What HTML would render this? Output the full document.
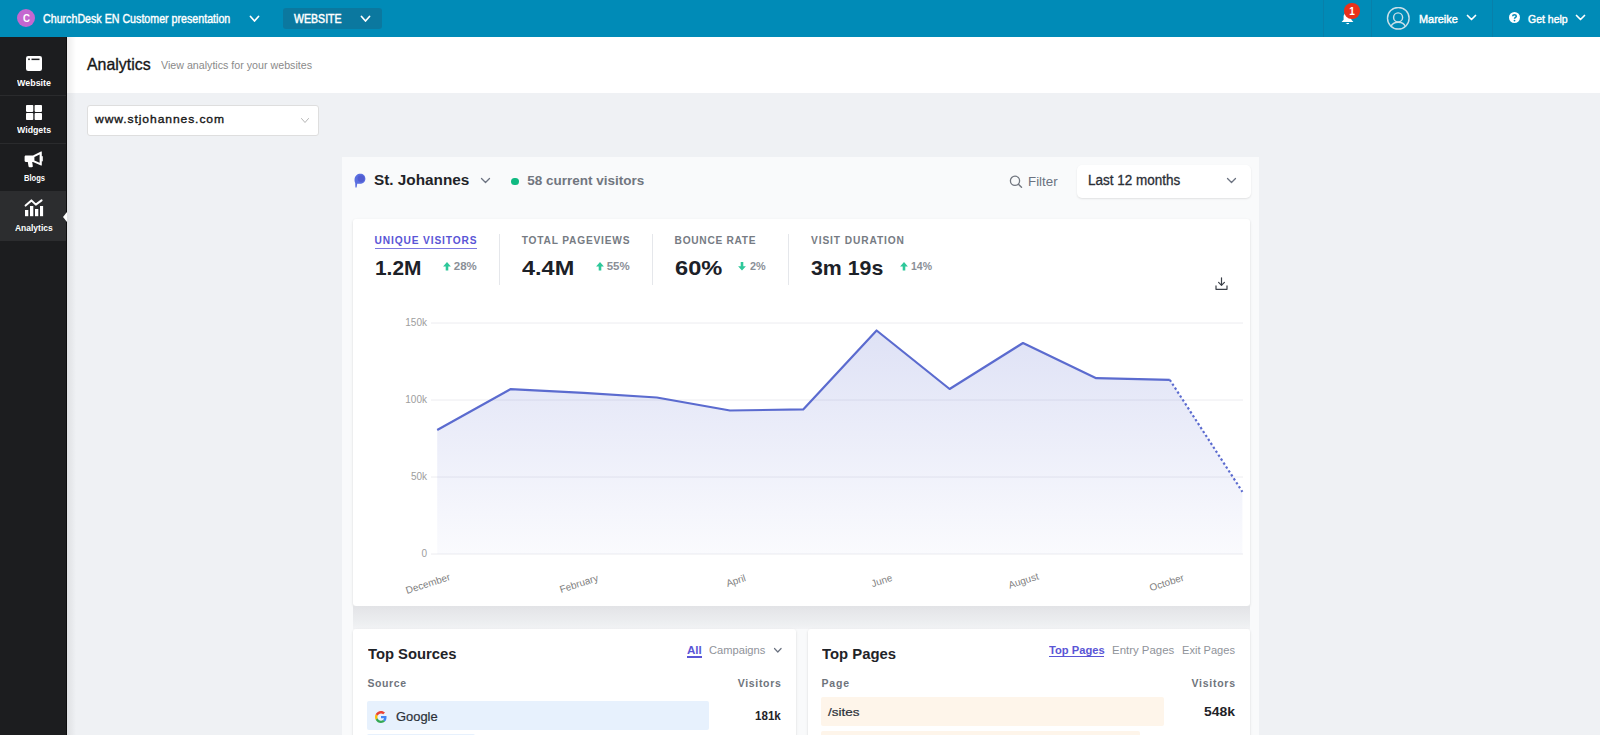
<!DOCTYPE html>
<html><head><meta charset="utf-8">
<style>
*{box-sizing:border-box;margin:0;padding:0}
html,body{width:1600px;height:735px;overflow:hidden;background:#eff1f4;font-family:"Liberation Sans",sans-serif}
body{position:relative}
.t{position:absolute;white-space:nowrap}
.b{position:absolute}
</style></head><body>
<div class="b" style="left:0;top:0;width:1600px;height:37px;background:#008bb7"></div>
<div class="b" style="left:17.3px;top:9.2px;width:18px;height:18px;border-radius:50%;background:#c567d0"></div>
<div class="t" style="left:22.60px;top:13.64px;font-size:10px;line-height:10px;color:#fff;font-weight:bold;transform:scaleX(0.9693);transform-origin:0 0;">C</div>
<div class="t" style="left:43.30px;top:12.87px;font-size:12.2px;line-height:12.2px;color:#fff;transform:scaleX(0.8750);transform-origin:0 0;-webkit-text-stroke:0.4px #fff;">ChurchDesk EN Customer presentation</div>
<svg class="t" style="left:249px;top:14.5px" width="11" height="7.5" viewBox="-1 -1 11 7.5"><path d="M0.5 0.5 L4.5 5.0 L8.5 0.5" fill="none" stroke="#fff" stroke-width="1.7" stroke-linecap="round" stroke-linejoin="round"/></svg>
<div class="b" style="left:283px;top:8px;width:99px;height:21px;background:#0b789f;border-radius:3px"></div>
<div class="t" style="left:293.90px;top:12.52px;font-size:12.5px;line-height:12.5px;color:#fff;transform:scaleX(0.8461);transform-origin:0 0;-webkit-text-stroke:0.5px #fff;">WEBSITE</div>
<svg class="t" style="left:360px;top:14.5px" width="11" height="7.5" viewBox="-1 -1 11 7.5"><path d="M0.5 0.5 L4.5 5.0 L8.5 0.5" fill="none" stroke="#fff" stroke-width="1.7" stroke-linecap="round" stroke-linejoin="round"/></svg>
<div class="b" style="left:1323px;top:0;width:1px;height:37px;background:#0880aa"></div>
<div class="b" style="left:1371px;top:0;width:1px;height:37px;background:#0880aa"></div>
<div class="b" style="left:1492px;top:0;width:1px;height:37px;background:#0880aa"></div>
<svg class="t" style="left:1340px;top:11px" width="15" height="14" viewBox="0 0 15 14"><path d="M7.5 1.5 C4.6 1.5 3.6 3.8 3.6 6.3 L3.6 8.8 L1.6 11 L13.4 11 L11.4 8.8 L11.4 6.3 C11.4 3.8 10.4 1.5 7.5 1.5Z M5.8 12 L9.2 12 C9.2 13.6 5.8 13.6 5.8 12Z" fill="#fff"/></svg>
<div class="b" style="left:1344px;top:3px;width:15.5px;height:15.5px;border-radius:50%;background:#e9311a"></div>
<div class="t" style="left:1349.20px;top:6.73px;font-size:10px;line-height:10px;color:#fff;font-weight:bold;">1</div>
<svg class="t" style="left:1386px;top:7px" width="24" height="23" viewBox="0 0 24 23"><circle cx="12.3" cy="11.25" r="10.8" fill="none" stroke="#c9dfe8" stroke-width="1.4"/><circle cx="12.1" cy="10.4" r="4.5" fill="none" stroke="#c9dfe8" stroke-width="1.4"/><path d="M5 19.6 C6 16.6 8.6 15.2 12.2 15.2 C15.8 15.2 18.4 16.6 19.4 19.6" fill="none" stroke="#c9dfe8" stroke-width="1.4"/></svg>
<div class="t" style="left:1418.60px;top:12.58px;font-size:11.6px;line-height:11.6px;color:#fff;transform:scaleX(0.9404);transform-origin:0 0;-webkit-text-stroke:0.45px #fff;">Mareike</div>
<svg class="t" style="left:1466px;top:14.2px" width="11" height="7" viewBox="-1 -1 11 7"><path d="M0.5 0.5 L4.5 4.5 L8.5 0.5" fill="none" stroke="#fff" stroke-width="1.7" stroke-linecap="round" stroke-linejoin="round"/></svg>
<svg class="t" style="left:1509px;top:11.8px" width="11" height="11" viewBox="0 0 11 11"><circle cx="5.5" cy="5.5" r="5.5" fill="#fff"/><path d="M3.7 4.2 C3.7 2.3 7.3 2.3 7.3 4.2 C7.3 5.5 5.5 5.4 5.5 6.8" fill="none" stroke="#008bb7" stroke-width="1.5"/><circle cx="5.5" cy="8.6" r="0.9" fill="#008bb7"/></svg>
<div class="t" style="left:1528.10px;top:12.58px;font-size:11.6px;line-height:11.6px;color:#fff;transform:scaleX(0.9053);transform-origin:0 0;-webkit-text-stroke:0.45px #fff;">Get help</div>
<svg class="t" style="left:1575px;top:14.2px" width="11" height="7" viewBox="-1 -1 11 7"><path d="M0.5 0.5 L4.5 4.5 L8.5 0.5" fill="none" stroke="#fff" stroke-width="1.7" stroke-linecap="round" stroke-linejoin="round"/></svg>
<div class="b" style="left:0;top:37px;width:67px;height:698px;background:#1c1d1f"></div>
<div class="b" style="left:0;top:95px;width:67px;height:1px;background:#2a2b2d"></div>
<div class="b" style="left:0;top:143px;width:67px;height:1px;background:#2a2b2d"></div>
<div class="b" style="left:0;top:191px;width:67px;height:50px;background:#2c2d2f"></div>
<div class="b" style="left:66px;top:37px;width:1px;height:698px;background:#0d0d0e"></div>
<svg class="t" style="left:26px;top:56px" width="16" height="15" viewBox="0 0 16 15"><rect x="0" y="0" width="16" height="15" rx="2.2" fill="#fff"/><rect x="2.2" y="2.5" width="1.6" height="1.6" fill="#1c1d1f"/><rect x="5.5" y="2.6" width="8" height="1.5" fill="#1c1d1f"/></svg>
<div class="t" style="left:16.80px;top:77.76px;font-size:9.5px;line-height:9.5px;color:#fff;font-weight:bold;transform:scaleX(0.9379);transform-origin:0 0;">Website</div>
<svg class="t" style="left:26px;top:104.5px" width="16" height="15" viewBox="0 0 16 15"><rect x="0" y="0" width="7.3" height="6.9" rx="0.8" fill="#fff"/><rect x="8.6" y="0" width="7.4" height="6.9" rx="0.8" fill="#fff"/><rect x="0" y="8.1" width="7.3" height="6.9" rx="0.8" fill="#fff"/><rect x="8.6" y="8.1" width="7.4" height="6.9" rx="0.8" fill="#fff"/></svg>
<div class="t" style="left:16.80px;top:124.96px;font-size:9.5px;line-height:9.5px;color:#fff;font-weight:bold;transform:scaleX(0.9224);transform-origin:0 0;">Widgets</div>
<svg class="t" style="left:24px;top:151px" width="20" height="17" viewBox="0 0 20 17"><path d="M1.8 4.6 L9 4.6 L17 0.6 L17.8 0.6 L17.8 14.4 L17 14.4 L9 11 L8.2 11 L8.8 15 C8.9 15.8 8.4 16.2 7.7 16.2 L5.6 16.2 C5 16.2 4.6 15.8 4.5 15.2 L3.8 11 L1.8 11 C1 11 0.6 10.4 0.6 9.6 L0.6 6 C0.6 5.2 1 4.6 1.8 4.6 Z" fill="#fff"/><path d="M10.4 6 L15.6 3.4 L15.6 11.8 L10.4 9.6 Z" fill="#1c1d1f"/><rect x="17.2" y="5" width="1.6" height="5.6" rx="0.8" fill="#fff"/></svg>
<div class="t" style="left:23.50px;top:173.46px;font-size:9.5px;line-height:9.5px;color:#fff;font-weight:bold;transform:scaleX(0.7957);transform-origin:0 0;">Blogs</div>
<svg class="t" style="left:24px;top:199px" width="20" height="18" viewBox="0 0 20 18"><path d="M1.6 6.6 L7.4 1.4 L11.8 5.6 L17.6 1.4" fill="none" stroke="#fff" stroke-width="2" stroke-linejoin="round" stroke-linecap="round"/><rect x="1" y="11" width="3.3" height="6.2" fill="#fff"/><rect x="6" y="7" width="3.3" height="10.2" fill="#fff"/><rect x="11" y="10" width="3.3" height="7.2" fill="#fff"/><rect x="16" y="7" width="3.1" height="10.2" fill="#fff"/></svg>
<div class="t" style="left:15.20px;top:222.96px;font-size:9.5px;line-height:9.5px;color:#fff;font-weight:bold;transform:scaleX(0.8925);transform-origin:0 0;">Analytics</div>
<div class="b" style="left:63px;top:211.5px;width:0;height:0;border-top:5px solid transparent;border-bottom:5px solid transparent;border-right:4px solid #fff"></div>
<div class="b" style="left:67px;top:37px;width:1533px;height:55.5px;background:#fff"></div>
<div class="b" style="left:67px;top:37px;width:9px;height:698px;background:linear-gradient(to right,rgba(0,0,0,0.07),rgba(0,0,0,0))"></div>
<div class="t" style="left:86.90px;top:55.63px;font-size:16.5px;line-height:16.5px;color:#161616;transform:scaleX(0.9633);transform-origin:0 0;-webkit-text-stroke:0.35px #161616;">Analytics</div>
<div class="t" style="left:161.00px;top:59.79px;font-size:11px;line-height:11px;color:#8a8a8a;transform:scaleX(0.9698);transform-origin:0 0;">View analytics for your websites</div>
<div class="b" style="left:87px;top:105px;width:231.5px;height:30.5px;background:#fff;border:1px solid #dedede;border-radius:3px"></div>
<div class="t" style="left:94.50px;top:114.01px;font-size:11.8px;line-height:11.8px;color:#161616;letter-spacing:0.9px;transform:scaleX(1.0233);transform-origin:0 0;-webkit-text-stroke:0.35px #161616;">www.stjohannes.com</div>
<svg class="t" style="left:300px;top:116.5px" width="10" height="7" viewBox="-1 -1 10 7"><path d="M0.5 0.5 L4.0 4.5 L7.5 0.5" fill="none" stroke="#b5b5b5" stroke-width="1.0" stroke-linecap="round" stroke-linejoin="round"/></svg>
<div class="b" style="left:342px;top:157px;width:917px;height:578px;background:#f9fafb"></div>
<svg class="t" style="left:353.5px;top:172.5px" width="12" height="15" viewBox="0 0 12 15"><path d="M6.3 0.8 C9.3 0.8 11.4 2.9 11.4 5.7 C11.4 8.7 9 10.8 5.8 10.8 L3.2 10.8 L2.6 14.6 L1.4 14.6 L1.2 10 C0.6 9 0.4 7.5 0.6 5.8 C1 2.9 3.3 0.8 6.3 0.8Z" fill="#5a6ee0"/><circle cx="7" cy="5.6" r="3.4" fill="#4c51c6" opacity="0.6"/></svg>
<div class="t" style="left:374.00px;top:173.45px;font-size:14px;line-height:14px;color:#1f2328;font-weight:bold;transform:scaleX(1.0937);transform-origin:0 0;">St. Johannes</div>
<svg class="t" style="left:479.5px;top:177.3px" width="11" height="7" viewBox="-1 -1 11 7"><path d="M0.5 0.5 L4.5 4.5 L8.5 0.5" fill="none" stroke="#6b7280" stroke-width="1.3" stroke-linecap="round" stroke-linejoin="round"/></svg>
<div class="b" style="left:511.3px;top:177.8px;width:7.5px;height:7.5px;border-radius:50%;background:#10b981"></div>
<div class="t" style="left:527.30px;top:173.87px;font-size:13.5px;line-height:13.5px;color:#71767f;font-weight:bold;">58 current visitors</div>
<svg class="t" style="left:1009px;top:174.5px" width="14" height="13" viewBox="0 0 14 13"><circle cx="6" cy="5.8" r="4.6" fill="none" stroke="#71767f" stroke-width="1.3"/><path d="M9.4 9.2 L12.5 12.3" stroke="#71767f" stroke-width="1.4" stroke-linecap="round"/></svg>
<div class="t" style="left:1027.60px;top:174.70px;font-size:13px;line-height:13px;color:#6b7280;transform:scaleX(1.0246);transform-origin:0 0;">Filter</div>
<div class="b" style="left:1077px;top:165px;width:173.5px;height:33px;background:#fff;border-radius:5px;box-shadow:0 1px 2px rgba(0,0,0,0.10)"></div>
<div class="t" style="left:1087.80px;top:174.02px;font-size:13.8px;line-height:13.8px;color:#2a2e35;transform:scaleX(0.9771);transform-origin:0 0;-webkit-text-stroke:0.3px #2a2e35;">Last 12 months</div>
<svg class="t" style="left:1225.5px;top:177px" width="11" height="7" viewBox="-1 -1 11 7"><path d="M0.5 0.5 L4.5 4.5 L8.5 0.5" fill="none" stroke="#6b7280" stroke-width="1.3" stroke-linecap="round" stroke-linejoin="round"/></svg>
<div class="b" style="left:353px;top:218.5px;width:897px;height:387.5px;background:#fff;border-radius:3px;box-shadow:0 1px 3px rgba(0,0,0,0.10),0 1px 2px rgba(0,0,0,0.06)"></div>
<div class="t" style="left:374.60px;top:235.77px;font-size:10.2px;line-height:10.2px;color:#5a55d6;font-weight:bold;letter-spacing:0.862px;">UNIQUE VISITORS</div>
<div class="t" style="left:374.60px;top:256.92px;font-size:21px;line-height:21px;color:#1c2128;font-weight:bold;transform:scaleX(0.9938);transform-origin:0 0;">1.2M</div>
<div class="t" style="left:453.80px;top:260.97px;font-size:11.5px;line-height:11.5px;color:#8a8f97;font-weight:bold;">28%</div>
<svg class="t" style="left:442.5px;top:262px" width="8" height="9" viewBox="0 0 8 9"><path d="M4 0.1 L7.9 4.4 L5.3 4.4 L5.3 8.6 L2.7 8.6 L2.7 4.4 L0.1 4.4 Z" fill="#2ec89a"/></svg>
<div class="t" style="left:521.70px;top:235.77px;font-size:10.2px;line-height:10.2px;color:#767b83;font-weight:bold;letter-spacing:0.805px;">TOTAL PAGEVIEWS</div>
<div class="t" style="left:521.70px;top:256.92px;font-size:21px;line-height:21px;color:#1c2128;font-weight:bold;transform:scaleX(1.1181);transform-origin:0 0;">4.4M</div>
<div class="t" style="left:606.70px;top:260.97px;font-size:11.5px;line-height:11.5px;color:#8a8f97;font-weight:bold;">55%</div>
<svg class="t" style="left:595.5px;top:262px" width="8" height="9" viewBox="0 0 8 9"><path d="M4 0.1 L7.9 4.4 L5.3 4.4 L5.3 8.6 L2.7 8.6 L2.7 4.4 L0.1 4.4 Z" fill="#2ec89a"/></svg>
<div class="t" style="left:674.60px;top:235.77px;font-size:10.2px;line-height:10.2px;color:#767b83;font-weight:bold;letter-spacing:0.705px;">BOUNCE RATE</div>
<div class="t" style="left:674.60px;top:256.92px;font-size:21px;line-height:21px;color:#1c2128;font-weight:bold;transform:scaleX(1.1253);transform-origin:0 0;">60%</div>
<div class="t" style="left:749.70px;top:260.97px;font-size:11.5px;line-height:11.5px;color:#8a8f97;font-weight:bold;transform:scaleX(0.9446);transform-origin:0 0;">2%</div>
<svg class="t" style="left:738.4px;top:262px" width="8" height="9" viewBox="0 0 8 9"><path d="M4 8.6 L7.9 4.3 L5.3 4.3 L5.3 0.1 L2.7 0.1 L2.7 4.3 L0.1 4.3 Z" fill="#2ec89a"/></svg>
<div class="t" style="left:811.00px;top:235.77px;font-size:10.2px;line-height:10.2px;color:#767b83;font-weight:bold;letter-spacing:0.891px;">VISIT DURATION</div>
<div class="t" style="left:811.00px;top:256.92px;font-size:21px;line-height:21px;color:#1c2128;font-weight:bold;transform:scaleX(1.0151);transform-origin:0 0;">3m 19s</div>
<div class="t" style="left:911.40px;top:260.97px;font-size:11.5px;line-height:11.5px;color:#8a8f97;font-weight:bold;transform:scaleX(0.9123);transform-origin:0 0;">14%</div>
<svg class="t" style="left:900px;top:262px" width="8" height="9" viewBox="0 0 8 9"><path d="M4 0.1 L7.9 4.4 L5.3 4.4 L5.3 8.6 L2.7 8.6 L2.7 4.4 L0.1 4.4 Z" fill="#2ec89a"/></svg>
<div class="b" style="left:374.6px;top:247.8px;width:102px;height:1.4px;background:#7c78e0"></div>
<div class="b" style="left:499px;top:233.5px;width:1px;height:51.5px;background:#e5e7eb"></div>
<div class="b" style="left:652px;top:233.5px;width:1px;height:51.5px;background:#e5e7eb"></div>
<div class="b" style="left:788px;top:233.5px;width:1px;height:51.5px;background:#e5e7eb"></div>
<svg class="t" style="left:1214.5px;top:277px" width="13" height="14" viewBox="0 0 13 14"><path d="M6.5 0.8 L6.5 8.2 M3.6 5.4 L6.5 8.3 L9.4 5.4" fill="none" stroke="#3a3f47" stroke-width="1.2" stroke-linecap="round" stroke-linejoin="round"/><path d="M1 8.5 L1 12.3 L12 12.3 L12 8.5" fill="none" stroke="#3a3f47" stroke-width="1.2" stroke-linejoin="round"/></svg>
<svg class="t" style="left:0;top:0" width="1600" height="735" viewBox="0 0 1600 735"><defs><linearGradient id="fg" x1="0" y1="330" x2="0" y2="554" gradientUnits="userSpaceOnUse"><stop offset="0" stop-color="#5b6bcf" stop-opacity="0.2"/><stop offset="1" stop-color="#5b6bcf" stop-opacity="0.03"/></linearGradient></defs><line x1="431" y1="323" x2="1243" y2="323" stroke="#ececf0" stroke-width="1"/><line x1="431" y1="400" x2="1243" y2="400" stroke="#ececf0" stroke-width="1"/><line x1="431" y1="477" x2="1243" y2="477" stroke="#ececf0" stroke-width="1"/><line x1="431" y1="554" x2="1243" y2="554" stroke="#ececf0" stroke-width="1"/><path d="M437.2 430 L510.4 389.2 L583.6 392.8 L656.8 397.5 L730 410.5 L803.2 409.4 L876.6 330.5 L949.6 389 L1023 343 L1096.2 378.2 L1169.8 379.8 L1242.4 491.8 L1242.4 554 L437.2 554 Z" fill="url(#fg)"/><path d="M437.2 430 L510.4 389.2 L583.6 392.8 L656.8 397.5 L730 410.5 L803.2 409.4 L876.6 330.5 L949.6 389 L1023 343 L1096.2 378.2 L1169.8 379.8" fill="none" stroke="#5b6bcf" stroke-width="2.2" stroke-linejoin="round"/><path d="M1169.8 379.8 L1242.4 491.8" fill="none" stroke="#5b6bcf" stroke-width="2.2" stroke-dasharray="2.3 2.4"/></svg>
<div class="t" style="left:405.31px;top:318.04px;font-size:10px;line-height:10px;color:#9d9d9d;">150k</div>
<div class="t" style="left:405.31px;top:395.04px;font-size:10px;line-height:10px;color:#9d9d9d;">100k</div>
<div class="t" style="left:410.88px;top:472.04px;font-size:10px;line-height:10px;color:#9d9d9d;">50k</div>
<div class="t" style="left:421.44px;top:549.03px;font-size:10px;line-height:10px;color:#9d9d9d;">0</div>
<div class="t" style="left:405.44px;top:579.00px;font-size:10px;line-height:10px;color:#808080;transform:rotate(-18deg);transform-origin:50% 50%">December</div>
<div class="t" style="left:558.99px;top:578.60px;font-size:10px;line-height:10px;color:#808080;transform:rotate(-18deg);transform-origin:50% 50%">February</div>
<div class="t" style="left:726.00px;top:575.50px;font-size:10px;line-height:10px;color:#808080;transform:rotate(-18deg);transform-origin:50% 50%">April</div>
<div class="t" style="left:871.16px;top:576.40px;font-size:10px;line-height:10px;color:#808080;transform:rotate(-18deg);transform-origin:50% 50%">June</div>
<div class="t" style="left:1007.73px;top:576.40px;font-size:10px;line-height:10px;color:#808080;transform:rotate(-18deg);transform-origin:50% 50%">August</div>
<div class="t" style="left:1149.21px;top:577.50px;font-size:10px;line-height:10px;color:#808080;transform:rotate(-18deg);transform-origin:50% 50%">October</div>
<div class="b" style="left:353px;top:606px;width:897px;height:23px;background:linear-gradient(to bottom,#e2e3e6 0%,#e7e8eb 30%,#eceef0 70%,#f2f3f5 100%)"></div>
<div class="b" style="left:353px;top:628.5px;width:442.5px;height:120px;background:#fff;border-radius:3px;box-shadow:0 1px 3px rgba(0,0,0,0.10),0 1px 2px rgba(0,0,0,0.06)"></div>
<div class="b" style="left:807.5px;top:628.5px;width:442.5px;height:120px;background:#fff;border-radius:3px;box-shadow:0 1px 3px rgba(0,0,0,0.10),0 1px 2px rgba(0,0,0,0.06)"></div>
<div class="t" style="left:367.50px;top:647.15px;font-size:14px;line-height:14px;color:#1f2328;font-weight:bold;transform:scaleX(1.0566);transform-origin:0 0;">Top Sources</div>
<div class="t" style="left:687.00px;top:645.39px;font-size:11px;line-height:11px;color:#5a55d6;font-weight:bold;transform:scaleX(1.0529);transform-origin:0 0;">All</div>
<div class="b" style="left:687px;top:656.3px;width:14.8px;height:1.4px;background:#5a55d6"></div>
<div class="t" style="left:708.90px;top:645.39px;font-size:11px;line-height:11px;color:#8f939a;transform:scaleX(1.0118);transform-origin:0 0;">Campaigns</div>
<svg class="t" style="left:773px;top:647.3px" width="9.6" height="6.5" viewBox="-1 -1 9.6 6.5"><path d="M0.5 0.5 L3.8 4.0 L7.1 0.5" fill="none" stroke="#6b7280" stroke-width="1.2" stroke-linecap="round" stroke-linejoin="round"/></svg>
<div class="t" style="left:367.50px;top:678.41px;font-size:10.5px;line-height:10.5px;color:#6f747c;font-weight:bold;letter-spacing:0.581px;">Source</div>
<div class="t" style="left:737.80px;top:678.41px;font-size:10.5px;line-height:10.5px;color:#6f747c;font-weight:bold;letter-spacing:0.668px;">Visitors</div>
<div class="b" style="left:367px;top:701.4px;width:342px;height:28.3px;background:#e7f1fd;border-radius:2px"></div>
<div class="b" style="left:367px;top:733.5px;width:108px;height:10px;background:#e7f1fd;border-radius:2px"></div>
<svg class="t" style="left:375px;top:710.5px" width="12" height="12" viewBox="0 0 48 48"><path fill="#EA4335" d="M24 9.5c3.5 0 6.6 1.2 9.1 3.6l6.8-6.8C35.8 2.4 30.3 0 24 0 14.6 0 6.6 5.4 2.6 13.3l7.9 6.1C12.4 13.7 17.7 9.5 24 9.5z"/><path fill="#4285F4" d="M46.1 24.5c0-1.6-.1-3.1-.4-4.5H24v9h12.4c-.5 2.9-2.2 5.3-4.6 6.9l7.7 6C43.9 37.8 46.1 31.7 46.1 24.5z"/><path fill="#FBBC05" d="M10.5 28.6c-.5-1.4-.8-3-.8-4.6s.3-3.2.8-4.6l-7.9-6.1C.9 16.6 0 20.2 0 24s.9 7.4 2.6 10.7l7.9-6.1z"/><path fill="#34A853" d="M24 48c6.5 0 11.9-2.1 15.9-5.8l-7.7-6c-2.2 1.5-5 2.3-8.2 2.3-6.3 0-11.6-4.2-13.5-10l-7.9 6.1C6.6 42.6 14.6 48 24 48z"/></svg>
<div class="t" style="left:396.00px;top:710.72px;font-size:12.5px;line-height:12.5px;color:#2b3038;transform:scaleX(1.0320);transform-origin:0 0;-webkit-text-stroke:0.2px #2b3038;">Google</div>
<div class="t" style="left:755.00px;top:709.84px;font-size:12px;line-height:12px;color:#1f2328;font-weight:bold;transform:scaleX(0.9664);transform-origin:0 0;">181k</div>
<div class="t" style="left:821.50px;top:647.15px;font-size:14px;line-height:14px;color:#1f2328;font-weight:bold;transform:scaleX(1.0608);transform-origin:0 0;">Top Pages</div>
<div class="t" style="left:1048.60px;top:644.99px;font-size:11px;line-height:11px;color:#5a55d6;font-weight:bold;transform:scaleX(1.0163);transform-origin:0 0;">Top Pages</div>
<div class="b" style="left:1048.6px;top:656px;width:55.7px;height:1.4px;background:#5a55d6"></div>
<div class="t" style="left:1112.00px;top:644.99px;font-size:11px;line-height:11px;color:#8f939a;transform:scaleX(1.0397);transform-origin:0 0;">Entry Pages</div>
<div class="t" style="left:1182.00px;top:644.99px;font-size:11px;line-height:11px;color:#8f939a;transform:scaleX(1.0079);transform-origin:0 0;">Exit Pages</div>
<div class="t" style="left:821.50px;top:678.21px;font-size:10.5px;line-height:10.5px;color:#6f747c;font-weight:bold;letter-spacing:0.801px;">Page</div>
<div class="t" style="left:1191.40px;top:678.21px;font-size:10.5px;line-height:10.5px;color:#6f747c;font-weight:bold;letter-spacing:0.754px;">Visitors</div>
<div class="b" style="left:820.7px;top:697.3px;width:343px;height:28.6px;background:#fef5ea;border-radius:2px"></div>
<div class="b" style="left:820.7px;top:730.7px;width:319.5px;height:10px;background:#fef5ea;border-radius:2px"></div>
<div class="t" style="left:828.30px;top:707.41px;font-size:11.8px;line-height:11.8px;color:#2b3038;transform:scaleX(1.1437);transform-origin:0 0;-webkit-text-stroke:0.2px #2b3038;">/sites</div>
<div class="t" style="left:1204.30px;top:706.24px;font-size:12px;line-height:12px;color:#1f2328;font-weight:bold;transform:scaleX(1.1612);transform-origin:0 0;">548k</div>
</body></html>
